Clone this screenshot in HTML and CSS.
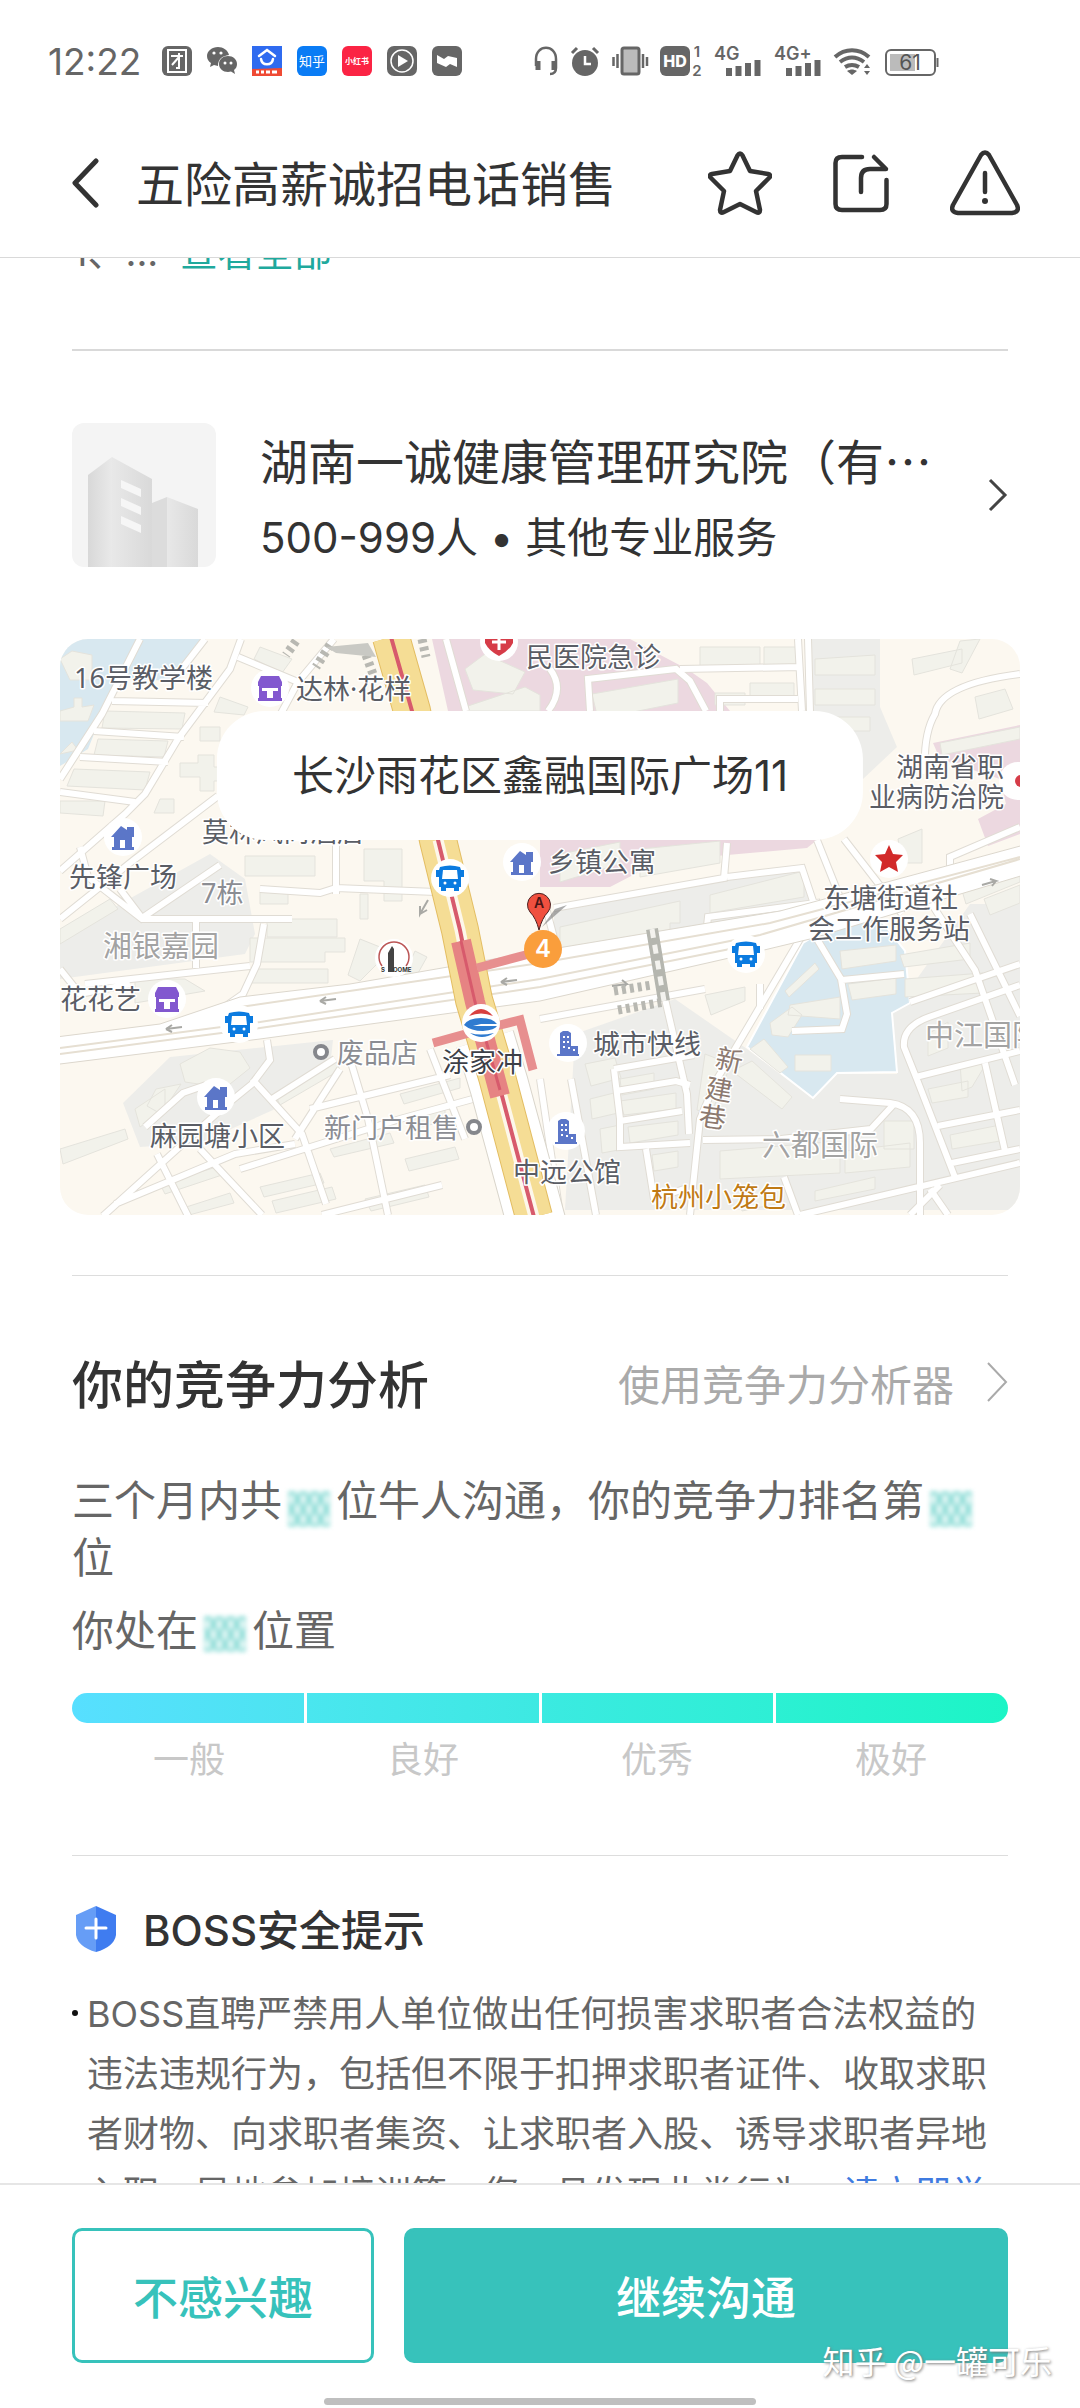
FILE: index.html
```html
<!DOCTYPE html>
<html lang="zh-CN">
<head>
  <meta charset="UTF-8">
  <meta name="viewport" content="width=device-width, initial-scale=1.0">
  <title>五险高薪诚招电话销售</title>
  <link rel="stylesheet" href="styles.css">
</head>
<body>
  <div class="page">
    <!-- Status bar -->
    <div class="status-bar">
      <span class="time">12:22</span>
      <div class="status-left">
        <svg width="30" height="30" viewBox="0 0 30 30"><rect width="30" height="30" rx="6" fill="#666"/><rect x="6" y="4" width="18" height="22" fill="none" stroke="#fff" stroke-width="2"/><path d="M9 10h12M17 7v15h-3M17 11l-7 8" fill="none" stroke="#fff" stroke-width="2"/></svg>
        <svg width="30" height="30" viewBox="0 0 30 30"><path d="M11 1C5 1 0 5 0 10c0 3 1.500 5.500 4 7l-1 4 4-2 4 1c0-7 4-10 11-11C21 4 16 1 11 1z" fill="#666"/><path d="M21 10c-5 0-9 3.500-9 8s4 8 9 8l3-.5 4 2.500-1-4c2-1.500 3-3.500 3-6 0-4.500-4-8-9-8z" fill="#666"/><g fill="#fff"><circle cx="7" cy="7" r="1.600"/><circle cx="14" cy="7" r="1.600"/><circle cx="18" cy="17" r="1.500"/><circle cx="24" cy="17" r="1.500"/></g></svg>
        <svg width="30" height="30" viewBox="0 0 30 30"><rect width="30" height="30" fill="#2f6bf0"/><path d="M0 23l30-1v8H0z" fill="#ef4a34"/><path d="M7 10l8-6 8 6M9 13c1 7 11 7 12 0" fill="none" stroke="#fff" stroke-width="2.500" stroke-linecap="round"/><path d="M4 26h3M9 26h3M14 26h4M20 26h5" stroke="#fff" stroke-width="3"/></svg>
        <svg width="30" height="30" viewBox="0 0 30 30"><rect width="30" height="30" rx="6" fill="#0a7cf5"/><text x="15" y="20" class="app-text app-zhihu">知乎</text></svg>
        <svg width="30" height="30" viewBox="0 0 30 30"><rect width="30" height="30" rx="6" fill="#fb2444"/><text x="15" y="18" class="app-text app-red">小红书</text></svg>
        <svg width="30" height="30" viewBox="0 0 30 30"><rect width="30" height="30" rx="7" fill="#666"/><circle cx="15" cy="15" r="11" fill="none" stroke="#fff" stroke-width="1.500"/><path d="M11 9l10 6-10 6z" fill="#fff"/></svg>
        <svg width="30" height="30" viewBox="0 0 30 30"><rect width="30" height="30" rx="6" fill="#666"/><path d="M5 9l7 4 4-3 9 2v9l-7-3-4 3-9-4z" fill="#fff"/></svg>
      </div>
      <div class="status-right">
        <svg width="24" height="30" viewBox="0 0 24 30" fill="none" stroke="#666"><path d="M2 20v-7C2 -2 22 -2 22 13v9c0 4-2 6-6 6" stroke-width="2.500"/><path d="M4 15v9M20 15v9" stroke-width="5"/></svg>
        <svg width="30" height="30" viewBox="0 0 30 30"><circle cx="15" cy="17" r="13" fill="#666"/><path d="M2 7l5-5M28 7l-5-5" stroke="#666" stroke-width="3"/><path d="M15 10v8h6" fill="none" stroke="#fff" stroke-width="2.500"/></svg>
        <svg width="36" height="30" viewBox="0 0 36 30" stroke="#666"><rect x="10" y="2" width="17" height="26" rx="2" fill="#bbb" stroke="#666" stroke-width="3"/><path d="M1.500 11v9M5.500 8v14M31 8v14M35 11v9" stroke-width="2.500"/></svg>
        <svg width="42" height="30" viewBox="0 0 42 30"><rect width="30" height="30" rx="6" fill="#666"/><text x="15" y="21" class="signal-text hd-text">HD</text><text x="37" y="11" class="signal-text">1</text><text x="37" y="30" class="signal-text">2</text></svg>
        <svg width="48" height="30" viewBox="0 0 48 30"><text x="0" y="14" class="net-text">4G</text><path d="M15 30v-8M24.500 30V20M34 30V17M43.500 30V14" stroke="#666" stroke-width="6"/></svg>
        <svg width="48" height="30" viewBox="0 0 48 30"><text x="0" y="14" class="net-text">4G+</text><path d="M15 30v-8M24.500 30V20M34 30V17M43.500 30V14" stroke="#666" stroke-width="6"/></svg>
        <svg width="39" height="30" viewBox="0 0 39 30"><g fill="none" stroke="#666" stroke-width="4"><path d="M1 11c10-9 24-9 34 0"/><path d="M6 16c8-6 16-6 24 0"/><path d="M11 21c5-3 9-3 14 0"/></g><path d="M13 25c4-2 6-2 10 0l-5 4zM30 22l3-4 3 4zM30 25h6l-3 4z" fill="#666"/></svg>
        <svg width="54" height="30" viewBox="0 0 54 30"><rect x="1" y="4" width="49" height="25" rx="5" fill="#fff" stroke="#666" stroke-width="2"/><rect x="5" y="8" width="25" height="17" fill="#bbb"/><path d="M52.500 12v9" stroke="#666" stroke-width="2"/><text x="25" y="24" class="battery-text">61</text></svg>
      </div>
    </div>

    <!-- Title bar -->
    <header class="title-bar">
      <button class="icon-btn back-btn" aria-label="返回">
        <svg width="28" height="50" viewBox="0 0 28 50"><path d="M24 3L3 25l21 22" fill="none" stroke="#333" stroke-width="5" stroke-linecap="round" stroke-linejoin="round"/></svg>
      </button>
      <h1>五险高薪诚招电话销售</h1>
      <div class="title-actions">
        <button class="icon-btn" aria-label="收藏">
          <svg width="64" height="64" viewBox="0 0 64 64"><path d="M29.500 4.500q2.500-4 5 0L42 20l18 3q4 1 1 4L48 40l4 19q0 4-4 2l-16-8-16 8q-4 2-4-2l4-19L3 27q-3-3 1-4l18-3z" fill="none" stroke="#333" stroke-width="4.500" stroke-linejoin="round"/></svg>
        </button>
        <button class="icon-btn" aria-label="分享">
          <svg width="56" height="60" viewBox="0 0 56 60"><path d="M29 4H9Q2.500 4 2.500 10v41q0 6 6.500 6h38q6.500 0 6.500-6V27M28 39V25q0-9 9-9h16L41 4" fill="none" stroke="#333" stroke-width="4.500" stroke-linecap="round" stroke-linejoin="round"/></svg>
        </button>
        <button class="icon-btn" aria-label="举报">
          <svg width="70" height="66" viewBox="0 0 70 66"><path d="M31 5q4-5 8 0l28 50q3 7-5 8H8q-8-1-5-8z" fill="none" stroke="#333" stroke-width="4.500" stroke-linejoin="round"/><path d="M35 23v19" stroke="#333" stroke-width="4.500" stroke-linecap="round"/><circle cx="35" cy="51" r="3" fill="#333"/></svg>
        </button>
      </div>
    </header>

    <main>
      <div class="job-desc">1、...&nbsp; <a href="#">查看全部</a></div>

      <!-- Company -->
      <section class="company">
        <svg class="company-logo" width="144" height="144" viewBox="0 0 144 144">
          <defs>
            <linearGradient id="tower"><stop offset="0" stop-color="#d8d8d8"/><stop offset="1" stop-color="#e9e9e9"/></linearGradient>
            <linearGradient id="side"><stop offset="0" stop-color="#e8e8e8"/><stop offset="1" stop-color="#d9d9d9"/></linearGradient>
          </defs>
          <rect width="144" height="144" fill="#f4f4f4"/>
          <path d="M16 52l24-18v110H16z" fill="url(#tower)"/>
          <path d="M40 34l40 22v88H40z" fill="url(#side)"/>
          <path d="M80 80l15-6v70H80z" fill="#dcdcdc"/>
          <path d="M95 74l31 12v58H95z" fill="url(#side)"/>
          <path d="M49 57l20 9v8l-20-9zM49 75l20 9v8l-20-9zM49 93l20 9v8l-20-9z" fill="#f6f6f6"/>
        </svg>
        <div class="company-info">
          <h2>湖南一诚健康管理研究院（有…</h2>
          <p>500-999人 • 其他专业服务</p>
        </div>
        <svg class="arrow" width="20" height="34" viewBox="0 0 20 34"><path d="M2 2l15 15L2 32" fill="none" stroke="#444" stroke-width="3"/></svg>
      </section>

      <!-- Map -->
      <section class="map">
        <svg class="map-canvas" viewBox="0 0 960 576">
          <defs>
            <g id="streets" fill="none">
              <path d="M181 0L170 30 118 100 85 155 65 175 0 232M145 0L110 45M52 62l96 2M34 92l90 6M20 118l88 5M80 0L42 75 0 140M0 153l75 10M158 157L75 220 0 280M20 208l8 30 54 42h150M60 250l22 29L160 226M136 281v48M204 285l-7 40-14 30-20 14M25 345l165-18M0 330l20 25 50-10M178 18l60 25-20 37M238 43l36-43"/>
              <path d="M207 401l3 20-18 24-27 22-30 27-92 83M192 440l50 55 24 70M85 488l38-34 23-8M97 515l35 70M140 510l62 66M55 565l120-50 60-10M180 530l160-50 80-22M235 500l45-70M212 460l63-40M290 420l18 60 20 96M370 410l35 90M250 470l140-34M262 576l120-30"/>
              <path d="M386 0l20 72M530 72l-2-32 88-10 14 12 16 30M490 30q15 20-2 42M738 0l4 72M748 0l2 72M620 30l122-2M660 72v-12h78M960 35q-80 10-85 40-12 20-10 60M276 205v50M200 250l60 4 16-5 100 4"/>
              <path d="M494 269l170-30 3-35M667 238l75-9 20 60M757 201l24 60M784 200l58 75M890 238v-20l70-30M865 255l50 76 40 115M494 299l-10-38M480 330l165-30M646 296l2-18 108-14v20L648 298"/>
              <path d="M740 300L675 410 657 440 640 480 630 576M700 345v25M757 300l24 40 6 35-5 15-50 2M782 341l62-6M850 363l110-38M910 275l50 102M960 412l-104 26-12-30q-2-20 25-30l91-32M856 438l40 103M925 424l20 88M878 487l82-16M892 524l68-14M780 460l50 4q30 4 30 40v72M835 464l-24 26-90 10-78 1M740 576l220-52M724 538l14 38M870 550l18 26M850 576l30-30"/>
              <path d="M605 360l22 95 2 40M554 430l80-14M554 430l6 50v28l70-4M556 452l60-10 14 4M560 482l62-10M586 510l8 50 30-10M480 380l55-10 110-20M511 440l25 136M480 440l20 136"/>
            </g>
            <g id="house"><circle r="19" fill="#fff"/><path d="M-12 0L-2-11 4-7v-3h7V0h-2v10h2v3h-22v-3h2V0z" fill="#5b76c8"/><path d="M-3 3h5v8h-5z" fill="#fff"/></g>
            <g id="shop"><circle r="19" fill="#fff"/><path d="M-9-12H9l3 6v4h-1v12h1v3h-24v-3h1V-2h-1v-4z" fill="#8258cf"/><path d="M-8 0H8v3H3v7h-6V3h-5z" fill="#fff"/></g>
            <g id="bus"><circle r="19" fill="#fff"/><path d="M-10-11q10-3 20 0l1 3h3v7h-3V9h-2v4H4v-3H-4v3h-5V9h-2V-1h-3v-7h3z" fill="#0b7be0"/><path d="M-7-8H7l1 9H-8z" fill="#fff"/><circle cx="-5" cy="5" r="1.500" fill="#fff"/><circle cx="5" cy="5" r="1.500" fill="#fff"/></g>
            <g id="office"><circle r="19" fill="#fff"/><path d="M-8-10l3-2h5l3 2V3h7v8h1v2h-22v-2h3z" fill="#5b76c8"/><path d="M-5-7h2v2h-2zM-1-7h2v2h-2zM-5-2h2v2h-2zM-1-2h2v2h-2zM-5 3h2v2h-2zM0 4h2v2H0zM5 6h2v2H5z" fill="#fff"/></g>
          </defs>

          <rect width="960" height="576" fill="#fcf8f0"/>
          <!-- water, hospital grounds, housing estates -->
          <path d="M0 0h145L118 42 62 40 42 75 28 110 0 127z" fill="#d8e8f0"/>
          <path d="M372 0h198l57 30 20 14 23 28H388zM480 201h277l-10 8-147 13-50 26h-70zM873 104l87-18v109l-32 12-10-27 28-15-6-25-60-20z" fill="#ecd8e0"/>
          <path d="M0 300l60-35 90-50 35 25 10 55-10 20-185 25zM110 418l163-17-3 27-57 43-73 33-60 4-17-44zM750 0h70v68l17 40-34 32-53-68zM494 269l250-40 18 50-110 24-158 26zM515 395l100-35 72 50 66 50 24-25h60l-5-60 78-110h50v306H505z" fill="#ededea"/>
          <path d="M743 304l47-29 30 5 25 32 5 52-18 10 5 59-60 1-24 25-66-51z" fill="#d8e8f0" stroke="#fff" stroke-width="2"/>
          <!-- buildings -->
          <g fill="#f2f2eb" stroke="#e4e3dc">
            <path d="M0 20l12-8 20 4v25H10zM0 72l14-4v-9h8v9l12-2-6 16H0zM0 115l12-12 6 8z"/>
            <path d="M45 72l80 2-3 16-80-1zM38 100l70 2-4 16-70-2zM14 130l76 3-5 18-78-4zM0 162h45l-2 15-43-3zM160 58l28 10-4 8-30-3zM140 88h20v14h-20zM120 124h18v-8h16v12h14v14h-14v10h-14v-14h-20zM100 160h14v14H94z"/>
            <path d="M185 217h70v20h-70zM304 210h38v52h-18v-20h-20zM200 253h28v12h-28zM300 255h8v25h-8zM207 280h70v18h-70zM190 299h95v14h-20v10h-75zM190 330h78v14h-78zM0 290l50-30 8 10-58 35zM75 340h50l20 12-70 12zM300 300l30 12-30 30-12-6zM355 312l12 6-14 25h-12z"/>
            <path d="M405 30l20-15 40 18-12 22-40-4zM532 55l86-15v24l-80 16zM405 68l60-20 15 8v16h-72zM200 8l32 12-10 14-28-14zM640 8h60v20h-60zM704 8h34v20h-34zM655 54h30v12h-30zM690 44h44v18h-44zM755 20l60-4v20h-60zM755 50h60v16h-60zM760 78h50v14h-50zM852 20l50-10v14l-48 12zM915 58l30-8 8 20-34 10zM900 2l20-2-18 34-12-4zM880 104l80-16v12l-78 16zM838 200l24-10v34h-20z"/>
            <path d="M500 215l60-12v22l-60 18zM580 210l80-8v22l-80 14zM500 288l120-26v22h-10v16l-110 18zM650 256l94-24v26l-94 16zM652 286l90-16v14l-88 14zM900 245l60-20v18l-54 22zM924 260l36-14v18l-30 12z"/>
            <path d="M780 312l56-6v16l-54 8zM788 345l48-6v16l-44 6zM840 316l70-12v16l-66 8zM845 340l78-6v20l-78 4zM730 366l50-8v22l-52-4zM710 384l22-16 10 8-14 22-16-2zM735 416h36v16h-36zM690 410l14-10 24 28-8 6zM645 356l40-8v14l-34 14zM725 352l30-28 4 6-30 28z"/>
            <path d="M120 425l30-16 30 4 10 16-25 20-40-6zM96 450l25-5-20 30-14-8zM75 470l30-20v20l-25 18zM215 455l60-34 5 10-60 35zM340 455l60-16v10l-56 16zM0 510l65-20 3 10-65 25zM100 545l60-18 5 8-60 20zM120 570l50-16 4 10-45 12zM200 548l60-14 4 10-60 14zM212 562l60-14 4 12-60 14zM270 510l60-16 4 10-60 14zM305 560l60-14 4 12-58 14zM345 520l50-12 4 12-50 12zM350 480l35-10v12l-32 8z"/>
            <path d="M525 425l30-6 6 20-30 8zM530 460l24-6 4 20-26 6zM540 490l20-4 4 24-22 4zM560 440l34-6v16l-32 6zM560 462l56-8v16l-52 6zM568 488l50-6v14l-48 8zM592 516l26-4v16l-24 4zM645 415l26 10-20 50-14-4zM672 432l20-10 40 36-10 12zM660 512l120-10v32l-120 6zM785 512l65-8v24l-65 6zM824 482h30v28h-30zM868 450l40-8v16l-36 6zM890 496l50-10v16l-48 8zM868 395l20-12v26l-20 8zM900 424l30-6-18 30-10 4zM755 552l60-14v12l-60 12zM680 562l40-14v16l-38 8z"/>
          </g>
          <!-- local streets -->
          <use href="#streets" stroke="#e0dcd4" stroke-width="8"/>
          <use href="#streets" stroke="#fff" stroke-width="6"/>
          <!-- east-west avenue -->
          <path d="M-4 398l104-13 80-27 110-13 190-33 240-40 244-66v30l-214 64-50 12-220 50-280 38-208 26z" fill="#fff" stroke="#dcd7cd"/>
          <g fill="none" stroke="#e6dfd2" stroke-width="2">
            <path d="M0 409l200-26 280-43 220-44 260-76M0 415l200-26 280-41 220-44M180 368l300-44 230-40 250-66"/>
          </g>
          <g fill="none" stroke="#a9a9a5" stroke-width="2">
            <path d="M122 388l-16 2 6-4M106 390l6 3M276 360l-16 2 6-4M260 362l6 3M457 341l-16 2 6-4M441 343l6 3M552 347l15-2-5-4M567 345l-5 4M922 246l14-4-6-2M936 242l-4 5M368 261l-8 14v-8M360 275l7-4"/>
          </g>
          <!-- footbridges -->
          <path d="M592 290l12 72" stroke="#b5b6af" stroke-width="12"/>
          <path d="M592 290l12 72" stroke="#f3f2ee" stroke-width="5" stroke-dasharray="9 7"/>
          <path d="M554 352l38-6M558 371l46-8M236 2l-10 14M270 6l-14 22M306 16l8 22M362 0l4 18" stroke="#b8b8b2" stroke-width="9" stroke-dasharray="4 4"/>
          <path d="M266 8l42-4 8 14-40-4z" fill="#c9c9c4"/>
          <!-- expressway -->
          <g fill="none">
            <path d="M425 400l14 46 38 140" stroke="#d9d5cb" stroke-width="60"/>
            <path d="M425 400l14 46 38 140" stroke="#fff" stroke-width="58"/>
            <path d="M331-2l21 74 26 129 22 90 14 70 23 77 37 140" stroke="#e3bd62" stroke-width="38"/>
            <path d="M331-2l21 74 26 129 22 90 14 70 23 77 37 140" stroke="#f5dd95" stroke-width="36"/>
            <path d="M378 201l22 90 14 70 23 77 37 140" stroke="#fdf7ea" stroke-width="11"/>
            <path d="M331-2l21 74 26 129 22 90 14 70 23 77 37 140" stroke="#d75a6c" stroke-width="4"/>
            <path d="M401 302l14 61 25 94" stroke="#e68383" stroke-width="20"/>
            <path d="M401 302l14 61 25 88" stroke="#d75a6c" stroke-width="3"/>
            <path d="M417 329l56-15M373 404l36-10M436 387l24-6 13 50" stroke="#e78f8f" stroke-width="9"/>
          </g>

          <!-- map pins -->
          <use href="#shop" x="210" y="49"/>
          <use href="#shop" x="107" y="360"/>
          <use href="#house" x="63" y="198"/>
          <use href="#house" x="462" y="223"/>
          <use href="#house" x="156" y="458"/>
          <use href="#bus" x="390" y="239"/>
          <use href="#bus" x="179" y="385"/>
          <use href="#bus" x="686" y="315"/>
          <use href="#office" x="508" y="404"/>
          <use href="#office" x="506" y="492"/>
          <circle cx="439" cy="3" r="19" fill="#fff"/>
          <path d="M425-6h28v10q-4 8-14 13-10-5-14-13z" fill="#d63c48"/>
          <path d="M439-4v15M432 3h14" stroke="#fff" stroke-width="3"/>
          <circle cx="829" cy="220" r="19" fill="#fff"/>
          <path d="M829 206l4 9 10 1-7 7 2 10-9-5-9 5 2-10-7-7 10-1z" fill="#d22a2a"/>
          <circle cx="958" cy="142" r="19" fill="#fff"/>
          <circle cx="961" cy="142" r="6" fill="#d63c48"/>
          <circle cx="334" cy="319" r="19" fill="#fff"/>
          <path d="M322 327a15 15 0 1 1 24 0" fill="none" stroke="#b55" stroke-width="1.500"/>
          <path d="M328 333v-19l4-7v26zM334 333v-23l-2-3v26z" fill="#444"/>
          <text x="321" y="333" class="shop-logo">S</text>
          <text x="333" y="333" class="shop-logo">OOME</text>
          <circle cx="421" cy="384" r="19" fill="#fff"/>
          <path d="M409 377q12-14 24 0-12-5-24 0z" fill="#d8403f"/>
          <path d="M404 386q4-7 17-7 12 0 16 6h-16l-8 2h24q-2 4-14 5-12 0-19-6zM410 394q10 3 24 0-12 8-24 0z" fill="#2f7bd0"/>
          <path d="M482 288l25-22-12 4z" fill="#777" opacity=".6"/>
          <path d="M479 291q-3-12-9-18a11.500 11.500 0 1 1 18 0q-6 6-9 18z" fill="#f0503f" stroke="#4a2020"/>
          <text x="479" y="269" class="pin-letter">A</text>
          <circle cx="483" cy="310" r="19" fill="#fa9e3c"/>
          <text x="483" y="318" class="pin-count">4</text>
          <g fill="#fff" stroke="#85878c" stroke-width="4"><circle cx="261" cy="413" r="6"/><circle cx="414" cy="488" r="6"/></g>

          <g class="map-label">
            <text x="14" y="49">16号教学楼</text>
            <text x="236" y="60">达林·花样</text>
            <text x="466" y="28">民医院急诊</text>
            <text x="142" y="203">莫林风尚酒店</text>
            <text x="9" y="248">先锋广场</text>
            <text x="488" y="233">乡镇公寓</text>
            <text x="836" y="138">湖南省职</text>
            <text x="809" y="168">业病防治院</text>
            <text x="763" y="269">东塘街道社</text>
            <text x="748" y="300">会工作服务站</text>
            <text x="0" y="370">花花艺</text>
            <text x="90" y="507">麻园塘小区</text>
            <text x="453" y="543">中远公馆</text>
            <text x="533" y="415">城市快线</text>
            <text x="382" y="433" class="label-dark">涂家冲</text>
            <text x="591" y="568" class="label-food">杭州小笼包</text>
          </g>
          <g class="map-label label-muted">
            <text x="141" y="264">7栋</text>
            <text x="277" y="424">废品店</text>
            <text x="264" y="499">新门户租售</text>
          </g>
          <g class="map-label label-area">
            <text x="43" y="318">湘银嘉园</text>
            <text x="702" y="517">六都国际</text>
            <text x="865" y="407">中江国际</text>
          </g>
          <g class="map-label label-road">
            <text transform="translate(654 428) rotate(12)">新</text>
            <text transform="translate(644 458) rotate(10)">建</text>
            <text transform="translate(638 486) rotate(8)">巷</text>
          </g>
        </svg>
        <div class="address">长沙雨花区鑫融国际广场11</div>
      </section>

      <!-- Competitiveness -->
      <section class="compete">
        <div class="compete-head">
          <h2>你的竞争力分析</h2>
          <a href="#">使用竞争力分析器
            <svg width="22" height="42" viewBox="0 0 22 42"><path d="M2 2l18 19L2 40" fill="none" stroke="#aaa" stroke-width="2"/></svg>
          </a>
        </div>
        <p>三个月内共<span class="masked"></span>位牛人沟通，你的竞争力排名第<span class="masked"></span>位</p>
        <p class="level-text">你处在<span class="masked"></span>位置</p>
        <div class="level-bar"><span></span><span></span><span></span><span></span></div>
        <div class="level-names"><span>一般</span><span>良好</span><span>优秀</span><span>极好</span></div>
      </section>

      <!-- Safety tips -->
      <section class="safety">
        <h3>
          <svg width="40" height="46" viewBox="0 0 40 46"><path d="M20 0L0 9v20q2 12 20 17z" fill="#669df6"/><path d="M20 0l20 9v20q-2 12-20 17z" fill="#3f7cf0"/><path d="M20 13v19M10 22h20" stroke="#fff" stroke-width="3" stroke-linecap="round"/></svg>
          BOSS安全提示
        </h3>
        <ul>
          <li>BOSS直聘严禁用人单位做出任何损害求职者合法权益的违法违规行为，包括但不限于扣押求职者证件、收取求职者财物、向求职者集资、让求职者入股、诱导求职者异地入职、异地参加培训等，您一旦发现此类行为，<a href="#">请立即举报</a></li>
        </ul>
      </section>
    </main>

    <!-- Bottom actions -->
    <footer>
      <div class="actions">
        <button class="btn btn-outline">不感兴趣</button>
        <button class="btn btn-primary">继续沟通</button>
      </div>
      <div class="home-indicator"></div>
      <div class="watermark">知乎 @一罐可乐</div>
    </footer>
  </div>
</body>
</html>
```
FILE: styles.css
```css
/* General Styles */
* {
  box-sizing: border-box;
}

body {
  margin: 0;
  background: #fff;
  color: #333;
  font-family: Inter, "Noto Sans CJK SC", sans-serif;
  font-size: 42px;
}

h1, h2, h3, p, ul {
  margin: 0;
  padding: 0;
  font-weight: 400;
}

a {
  text-decoration: none;
}

svg {
  display: block;
  flex: none;
}

.page {
  position: relative;
  display: flex;
  flex-direction: column;
  height: 100vh;
}

/* Status bar */
.status-bar {
  display: flex;
  align-items: center;
  height: 108px;
  padding: 14px 48px 0;
  flex: none;
}

.status-bar svg {
  overflow: visible;
}

.time {
  width: 114px;
  color: #666;
  font-size: 37px;
}

.status-left {
  display: flex;
  gap: 15px;
  margin-right: 72px;
}

.status-right {
  display: flex;
  gap: 12px;
}

.app-text {
  fill: #fff;
  text-anchor: middle;
}

.app-zhihu {
  font-size: 13px;
}

.app-red {
  font-size: 8px;
  font-weight: 700;
}

.signal-text {
  fill: #666;
  font-size: 15px;
  font-weight: 600;
  text-anchor: middle;
}

.hd-text {
  fill: #fff;
  font-size: 16px;
  font-weight: 800;
}

.net-text {
  fill: #666;
  font-size: 18px;
  font-weight: 600;
}

.battery-text {
  fill: #555;
  font-size: 21px;
  text-anchor: middle;
}

/* Title bar */
.title-bar {
  display: flex;
  align-items: center;
  height: 150px;
  padding: 0 60px 0 72px;
  border-bottom: 1px solid #d9d9d9;
  flex: none;
}

.title-bar h1 {
  flex: 1;
  padding-bottom: 4px;
  font-size: 48px;
  white-space: nowrap;
}

.icon-btn {
  padding: 0;
  border: none;
  background: none;
  cursor: pointer;
}

.back-btn {
  margin-right: 36px;
}

.title-actions {
  display: flex;
  align-items: center;
  gap: 61px;
}

/* Scrolling content */
main {
  flex: 1;
  min-height: 0;
  padding: 0 72px;
  overflow: hidden;
}

.job-desc {
  margin-top: -36px;
  padding-bottom: 67px;
  border-bottom: 2px solid #d9d9d9;
  color: #666;
  font-size: 38px;
  line-height: 60px;
}

.job-desc a {
  color: #1fa99d;
}

/* Company */
.company {
  display: flex;
  align-items: center;
  padding: 72px 0;
}

.company-logo {
  border-radius: 12px;
}

.company-info {
  flex: 1;
  margin-left: 44px;
}

.company-info h2 {
  margin-bottom: 14px;
  font-family: "Noto Sans CJK SC", sans-serif;
  font-size: 48px;
  line-height: 72px;
}

.company-info p {
  line-height: 58px;
}

/* Map */
.map {
  position: relative;
  margin: 0 -12px 60px;
  border-radius: 28px;
  overflow: hidden;
}

.map-canvas {
  width: 100%;
}

.address {
  position: absolute;
  top: 72px;
  left: 50%;
  transform: translateX(-50%);
  padding: 0 75px;
  border-radius: 48px;
  background: #fff;
  line-height: 129px;
  white-space: nowrap;
}

.map-label {
  fill: #5a5d65;
  stroke: #fff;
  stroke-width: 3px;
  stroke-linejoin: round;
  paint-order: stroke;
  font-family: "Noto Sans", "Noto Sans CJK SC", sans-serif;
  font-size: 27px;
}

.label-dark {
  fill: #3c3f48;
}

.label-food {
  fill: #c07a14;
}

.label-muted {
  fill: #8b8d93;
}

.label-area {
  fill: #a3a3a3;
  font-size: 29px;
}

.label-road {
  fill: #8d7a70;
}

.shop-logo {
  fill: #333;
  font-size: 6px;
  font-weight: 700;
}

.pin-letter {
  fill: #4a1515;
  font-size: 14px;
  font-weight: 600;
  text-anchor: middle;
}

.pin-count {
  fill: #fff;
  font-size: 24px;
  font-weight: 600;
  text-anchor: middle;
}

/* Competitiveness */
.compete {
  padding: 76px 0 74px;
  border-top: 1px solid #ddd;
  border-bottom: 1px solid #ddd;
}

.compete-head {
  display: flex;
  justify-content: space-between;
  align-items: center;
  height: 60px;
  margin-bottom: 60px;
}

.compete-head h2 {
  font-size: 51px;
  font-weight: 500;
}

.compete-head a {
  display: flex;
  align-items: center;
  gap: 32px;
  color: #aaa;
}

.compete p {
  margin-bottom: 16px;
  color: #666;
  line-height: 57px;
}

/* Hidden numbers */
.masked {
  display: inline-block;
  width: 42px;
  height: 36px;
  margin: 0 6px;
  vertical-align: -11px;
  background:
    repeating-linear-gradient(60deg, rgba(110, 210, 203, 0.5) 0 4px, transparent 4px 10px),
    repeating-linear-gradient(-60deg, rgba(110, 210, 203, 0.5) 0 4px, transparent 4px 10px),
    #e0f6f4;
  filter: blur(2px);
}

.level-text .masked {
  vertical-align: -6px;
}

.level-bar {
  display: flex;
  gap: 3px;
  height: 30px;
  margin-top: 34px;
  border-radius: 15px;
  overflow: hidden;
}

.level-bar span {
  flex: 1;
}

.level-bar span:nth-child(1) {
  background: linear-gradient(90deg, #57dfff, #4ce4f0);
}

.level-bar span:nth-child(2) {
  background: linear-gradient(90deg, #4ae6ef, #3de9e2);
}

.level-bar span:nth-child(3) {
  background: linear-gradient(90deg, #3beae1, #2eefd5);
}

.level-bar span:nth-child(4) {
  background: linear-gradient(90deg, #2cf0d3, #1cf5c6);
}

.level-names {
  display: flex;
  margin-top: 16px;
  color: #c8c8c8;
  font-size: 36px;
  line-height: 42px;
  text-align: center;
}

.level-names span {
  flex: 1;
}

/* Safety tips */
.safety {
  padding-top: 45px;
}

.safety h3 {
  display: flex;
  align-items: center;
  gap: 27px;
  padding-left: 4px;
  margin-bottom: 23px;
  font-size: 42px;
  font-weight: 500;
  line-height: 60px;
}

.safety h3 svg {
  margin-bottom: 4px;
}

.safety ul {
  list-style: none;
}

.safety li {
  position: relative;
  padding-left: 15px;
  color: #666;
  font-size: 36px;
  line-height: 60px;
}

.safety li::before {
  content: "";
  position: absolute;
  top: 26px;
  left: 0;
  width: 6px;
  height: 6px;
  border-radius: 50%;
  background: #111;
}

.safety li a {
  color: #3f7be0;
}

/* Bottom actions */
footer {
  position: relative;
  flex: none;
  padding: 43px 72px 3px;
  border-top: 2px solid #e6e6e6;
  background: #fff;
}

.actions {
  display: grid;
  grid-template-columns: 1fr 2fr;
  gap: 30px;
}

.btn {
  height: 135px;
  border: 3px solid #37c2bb;
  border-radius: 10px;
  font-family: inherit;
  font-size: 45px;
  font-weight: 500;
  cursor: pointer;
}

.btn-outline {
  background: #fff;
  color: #37c2bb;
}

.btn-primary {
  background: #37c2bb;
  color: #fff;
}

.home-indicator {
  width: 432px;
  height: 7px;
  margin: 35px auto 0;
  border-radius: 4px;
  background: #bfbfbf;
}

.watermark {
  position: absolute;
  right: 28px;
  bottom: 25px;
  color: #fff;
  font-family: "Noto Sans CJK SC", sans-serif;
  font-size: 32px;
  text-shadow: 1px 1px 3px #777;
}
```
